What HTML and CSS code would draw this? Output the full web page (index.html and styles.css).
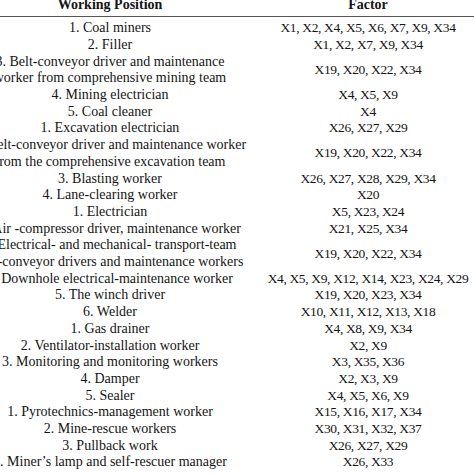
FILE: index.html
```html
<!DOCTYPE html>
<html lang="en">
<head>
<meta charset="utf-8">
<title>Working positions and factors</title>
<link rel="stylesheet" href="styles.css">
</head>
<body>
<table class="factors">
  <colgroup><col class="col-pos"><col class="col-fac"></colgroup>
  <thead>
    <tr><th class="pos">Working Position</th><th class="fac">Factor</th></tr>
  </thead>
  <tbody>
    <tr class="first"><td class="pos">1. Coal miners</td><td class="fac">X1, X2, X4, X5, X6, X7, X9, X34</td></tr>
    <tr><td class="pos">2. Filler</td><td class="fac">X1, X2, X7, X9, X34</td></tr>
    <tr><td class="pos">3. Belt-conveyor driver and maintenance<br>worker from comprehensive mining team</td><td class="fac">X19, X20, X22, X34</td></tr>
    <tr><td class="pos">4. Mining electrician</td><td class="fac">X4, X5, X9</td></tr>
    <tr><td class="pos">5. Coal cleaner</td><td class="fac">X4</td></tr>
    <tr><td class="pos">1. Excavation electrician</td><td class="fac">X26, X27, X29</td></tr>
    <tr><td class="pos">2. Belt-conveyor driver and maintenance worker<br>from the comprehensive excavation team</td><td class="fac">X19, X20, X22, X34</td></tr>
    <tr><td class="pos">3. Blasting worker</td><td class="fac">X26, X27, X28, X29, X34</td></tr>
    <tr><td class="pos">4. Lane-clearing worker</td><td class="fac">X20</td></tr>
    <tr><td class="pos">1. Electrician</td><td class="fac">X5, X23, X24</td></tr>
    <tr><td class="pos">2. Air -compressor driver, maintenance worker</td><td class="fac">X21, X25, X34</td></tr>
    <tr><td class="pos">3. Electrical- and mechanical- transport-team<br>belt-conveyor drivers and maintenance workers</td><td class="fac">X19, X20, X22, X34</td></tr>
    <tr><td class="pos">4. Downhole electrical-maintenance worker</td><td class="fac">X4, X5, X9, X12, X14, X23, X24, X29</td></tr>
    <tr><td class="pos">5. The winch driver</td><td class="fac">X19, X20, X23, X34</td></tr>
    <tr><td class="pos">6. Welder</td><td class="fac">X10, X11, X12, X13, X18</td></tr>
    <tr><td class="pos">1. Gas drainer</td><td class="fac">X4, X8, X9, X34</td></tr>
    <tr><td class="pos">2. Ventilator-installation worker</td><td class="fac">X2, X9</td></tr>
    <tr><td class="pos">3. Monitoring and monitoring workers</td><td class="fac">X3, X35, X36</td></tr>
    <tr><td class="pos">4. Damper</td><td class="fac">X2, X3, X9</td></tr>
    <tr><td class="pos">5. Sealer</td><td class="fac">X4, X5, X6, X9</td></tr>
    <tr><td class="pos">1. Pyrotechnics-management worker</td><td class="fac">X15, X16, X17, X34</td></tr>
    <tr><td class="pos">2. Mine-rescue workers</td><td class="fac">X30, X31, X32, X37</td></tr>
    <tr><td class="pos">3. Pullback work</td><td class="fac">X26, X27, X29</td></tr>
    <tr><td class="pos">4. Miner’s lamp and self-rescuer manager</td><td class="fac">X26, X33</td></tr>
  </tbody>
</table>
</body>
</html>
```
FILE: styles.css
```css
html, body {
  margin: 0;
  padding: 0;
  background: #ffffff;
  overflow: hidden;
}

body {
  width: 474px;
  height: 474px;
  font-family: "Liberation Serif", "Times New Roman", serif;
  color: #141414;
}

.factors {
  border-collapse: collapse;
  table-layout: fixed;
  width: 516px;
  margin-left: -42px;
  margin-top: -3px;
}

.col-pos { width: 304px; }
.col-fac { width: 212px; }

.factors th,
.factors td {
  padding: 0;
  text-align: center;
  vertical-align: middle;
  white-space: nowrap;
  line-height: 16.7px;
}

.factors th {
  font-size: 14px;
  font-weight: bold;
  padding-bottom: 2.5px;
  border-bottom: 1px solid #555555;
}

.factors td.pos {
  font-size: 14px;
}

.factors td.fac {
  font-size: 13.5px;
  letter-spacing: -0.35px;
}

.factors tr.first td {
  padding-top: 3px;
}
```
